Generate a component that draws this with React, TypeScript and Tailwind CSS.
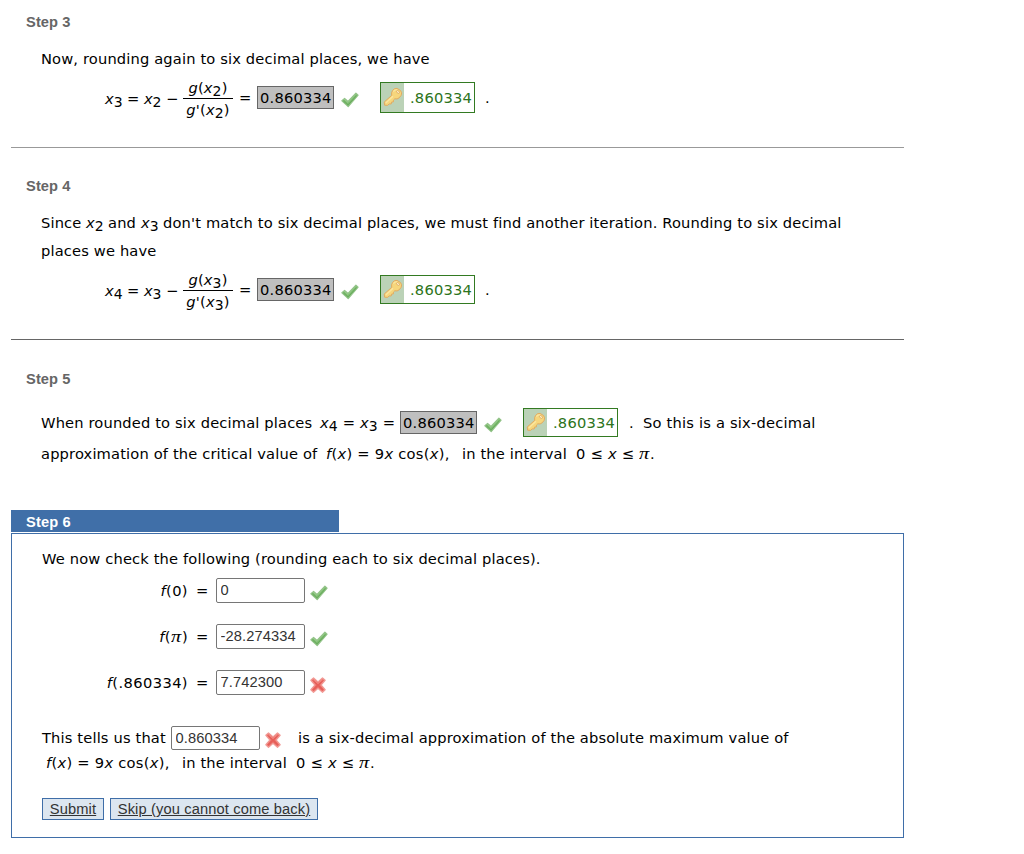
import type { ReactNode } from "react";
import clsx from "clsx";

// ── Icons ─────────────────────────────────────────────────────
function Check() {
  return (
    <svg width="18" height="16" viewBox="0 0 18 16" className="shrink-0">
      <path
        d="M.9 8.7 3.6 6.4 7 9.4 14.9 1.2 17.1 3.2 7.2 14.6Z"
        fill="#79b96b"
        stroke="#93c389"
        strokeWidth="1.2"
        strokeLinejoin="round"
      />
      <path d="M2.4 9.1 7.1 13.2 15.4 3.8" fill="none" stroke="#68ab5d" strokeWidth="1" />
      <path d="M3.2 7.3 7 10.6 14.9 2.3" fill="none" stroke="#98cb8c" strokeWidth="1" />
    </svg>
  );
}

function Cross() {
  return (
    <svg width="16" height="16" viewBox="0 0 16 16" className="shrink-0">
      <path
        d="M3.5.9 8 5 12.5.9 15.1 3.3 11 8 15.1 12.7 12.5 15.2 8 11.2 3.5 15.2.9 12.7 5 8 .9 3.3Z"
        fill="#ea6a64"
        stroke="#f19a95"
        strokeWidth="1.3"
        strokeLinejoin="round"
      />
      <path d="M3.2 3.2 12.8 13M12.8 3.2 3.2 13" stroke="#e65f59" strokeWidth="1.4" />
      <path d="M3 2.4 8 6.6 13 2.4" fill="none" stroke="#f1867f" strokeWidth="1" />
    </svg>
  );
}

function Key() {
  return (
    <svg width="20" height="20" viewBox="0 0 20 20" className="shrink-0">
      <path
        d="M9.6 3.4Q11.4 1 14.2 1.4L17.6 3.6Q19.3 5.6 18.2 8.3L16.2 10.8Q14.2 12.6 11.8 11.8L10.4 13.2 10.4 14.9 8.5 15.1 8.2 17 6.2 16.9 4.6 18.4 1.6 18.2 1.2 15 8.7 8.4Q8 5.5 9.6 3.4Z"
        fill="#f6d67c"
        stroke="#e0ab62"
        strokeWidth="1"
        strokeLinejoin="round"
      />
      <path d="M2.8 15.9 10 9.3M10.4 4.6Q11.8 2.5 14 2.9" fill="none" stroke="#fae6a2" strokeWidth="1.3" />
      <ellipse cx="15" cy="5" rx="1.7" ry="1.1" transform="rotate(40 15 5)" fill="#fff3d0" stroke="#dca95c" strokeWidth=".8" />
    </svg>
  );
}

// ── Math pieces ───────────────────────────────────────────────
function Var({ name = "x", sub }: { name?: string; sub?: string }) {
  return (
    <>
      <i>{name}</i>
      {sub && <span className="relative top-[3px] text-[14px]">{sub}</span>}
    </>
  );
}

function Pi() {
  return (
    <i className="mx-[1px] inline-block scale-x-120 font-['Liberation_Serif',serif] text-[17px] leading-[0]">π</i>
  );
}

// A run of text with its own column in the line
function Run({ w, className, children }: { w: string; className?: string; children: ReactNode }) {
  return <span className={clsx("shrink-0 whitespace-pre", w, className)}>{children}</span>;
}

function Line({ h, className, children }: { h: string; className?: string; children: ReactNode }) {
  return <div className={clsx("flex items-center", h, className)}>{children}</div>;
}

function Fraction({ sub }: { sub: string }) {
  return (
    <span className="mt-[2px] mr-[6px] flex w-[50px] shrink-0 flex-col text-center">
      <span className="h-[20px] border-b border-black leading-[17px]">
        <i>g</i>(<Var sub={sub} />)
      </span>
      <span className="h-[20px] leading-[21px] tracking-[0.2px]">
        <i>g'</i>(<Var sub={sub} />)
      </span>
    </span>
  );
}

// Graded answer, its mark and the key with the expected value
function Graded({ tall }: { tall?: boolean }) {
  return (
    <>
      <span className="-mt-[2px] flex h-[23px] w-[77px] shrink-0 items-center border border-[#666] bg-[#bfbfbf] pt-[2px] pl-[2px] tracking-[0.2px] whitespace-nowrap">
        0.860334
      </span>
      <span className="mt-[3px] ml-[7px] flex w-[39px] shrink-0">
        <Check />
      </span>
      <span
        className={clsx(
          "-mt-[2px] flex w-[95px] shrink-0 border border-[#337a22] text-[#2d7420]",
          tall ? "h-[31px]" : "h-[29px]",
        )}
      >
        <span className="flex w-[23px] items-center justify-center bg-[#bbd2b7]">
          <Key />
        </span>
        <span className="flex items-center pt-[2px] pl-[6px] tracking-[0.2px]">.860334</span>
      </span>
    </>
  );
}

function Equation({ left, right, h, tall }: { left: string; right: string; h: string; tall?: boolean }) {
  return (
    <Line h={h} className="pl-[94px]">
      <Run w="w-[78px]" className="mt-[1px] tracking-[-0.05px]">
        <Var sub={left} /> = <Var sub={right} /> −
      </Run>
      <Fraction sub={right} />
      <Run w="w-[18px]">=</Run>
      <Graded tall={tall} />
      <Run w="w-[10px]" className="ml-[10px]">.</Run>
    </Line>
  );
}

function Heading({ children }: { children: ReactNode }) {
  return (
    <h2 className="pl-[15px] font-['Liberation_Sans',Arial,sans-serif] text-[14.67px] leading-[20px] font-bold tracking-[0.1px] text-[#666]">
      {children}
    </h2>
  );
}

function Field({ value, h = "h-[25px]" }: { value: string; h?: string }) {
  return (
    <input
      defaultValue={value}
      className={clsx(
        "w-[89px] shrink-0 rounded-[2px] border border-[#767676] bg-white px-[3.5px] pb-[1px] font-['Liberation_Sans',Arial,sans-serif] text-[14.67px] tracking-[0.1px] text-[#333]",
        h,
      )}
    />
  );
}

function CheckRow({ label, value, ok }: { label: ReactNode; value: string; ok: boolean }) {
  return (
    <div className="flex h-[46px] items-center">
      <span className="mt-[1px] w-[176px] shrink-0 text-right tracking-[0.4px] whitespace-pre">{label}</span>
      <Run w="w-[20px]" className="mt-[2px] ml-[8px]">=</Run>
      <Field value={value} />
      <span className="mt-[5px] ml-[5px]">{ok ? <Check /> : <Cross />}</span>
    </div>
  );
}

function Domain() {
  return (
    <>
      <Run w="w-[136px]" className="tracking-[0.27px]">
        <i>f</i>(<i>x</i>) = 9<i>x</i> cos(<i>x</i>),
      </Run>
      <Run w="w-[114px]">in the interval</Run>
      <Run w="w-[90px]" className="tracking-[0.25px]">
        0 ≤ <i>x</i> ≤ <Pi />.
      </Run>
    </>
  );
}

const BUTTON =
  "h-[22px] border border-[#3f6ea8] bg-[#dce6f0] text-center font-['Liberation_Sans',Arial,sans-serif] text-[14.67px] leading-[20px] tracking-[0.13px] whitespace-nowrap text-[#333] underline";

export default function App() {
  return (
    <main className="h-[854px] w-[1024px] overflow-hidden bg-white pl-[11px] font-['DejaVu_Sans',Verdana,sans-serif] text-[14.67px] tracking-[0.15px] text-black">
      <div className="w-[893px]">
        {/* Step 3 */}
        <section className="h-[148px] border-b border-[#999] pt-[12px]">
          <Heading>Step 3</Heading>
          <Line h="h-[24px]" className="mt-[15px] pl-[30px]">
            <Run w="w-[390px]">Now, rounding again to six decimal places, we have</Run>
          </Line>
          <Equation left="3" right="2" h="h-[54px]" tall />
        </section>

        {/* Step 4 */}
        <section className="h-[192px] border-b border-[#666] pt-[28px]">
          <Heading>Step 4</Heading>
          <Line h="h-[28px]" className="mt-[13px] pl-[30px]">
            <Run w="w-[45px]">Since</Run>
            <Run w="w-[22px]"><Var sub="2" /></Run>
            <Run w="w-[33px]">and</Run>
            <Run w="w-[22px]"><Var sub="3" /></Run>
            <Run w="w-[680px]">don't match to six decimal places, we must find another iteration. Rounding to six decimal</Run>
          </Line>
          <Line h="h-[28px]" className="pl-[30px]">places we have</Line>
          <Equation left="4" right="3" h="h-[50px]" />
        </section>

        {/* Step 5 */}
        <section className="h-[170px] pt-[29px]">
          <Heading>Step 5</Heading>
          <Line h="h-[30px]" className="mt-[19px] pl-[30px]">
            <Run w="w-[279px]">When rounded to six decimal places</Run>
            <Run w="w-[80px]">
              <Var sub="4" /> = <Var sub="3" /> =
            </Run>
            <Graded />
            <Run w="w-[14px]" className="ml-[11px]">.</Run>
            <Run w="w-[174px]" className="tracking-[0.2px]">So this is a six-decimal</Run>
          </Line>
          <Line h="h-[30px]" className="mt-[1px] pl-[30px]">
            <Run w="w-[285px]">approximation of the critical value of</Run>
            <Domain />
          </Line>
        </section>

        {/* Step 6, the open one */}
        <h2 className="mb-[1px] h-[22px] w-[328px] bg-[#406fa8] pt-[1px] pl-[15px] font-['Liberation_Sans',Arial,sans-serif] text-[14.67px] leading-[23px] font-bold text-white">
          Step 6
        </h2>
        <section className="h-[305px] border border-[#3f6ea8] pt-[15px] pl-[30px]">
          <Line h="h-[20px]">
            <Run w="w-[500px]">We now check the following (rounding each to six decimal places).</Run>
          </Line>
          <div className="-mt-[2px] -ml-[30px]">
            <CheckRow label={<><i>f</i>(0)</>} value="0" ok />
            <CheckRow label={<><i>f</i>(<Pi />)</>} value="-28.274334" ok />
            <CheckRow label={<><i>f</i>(.860334)</>} value="7.742300" ok={false} />
          </div>
          <Line h="h-[26px]" className="mt-[20px]">
            <Run w="w-[129px]">This tells us that</Run>
            <Field value="0.860334" h="h-[24px]" />
            <span className="mt-[3px] ml-[5px] w-[33px] shrink-0">
              <Cross />
            </span>
            <Run w="w-[492px]">is a six-decimal approximation of the absolute maximum value of</Run>
          </Line>
          <Line h="h-[24px]" className="pl-[4px]">
            <Domain />
          </Line>
          <div className="mt-[23px] flex gap-[6px]">
            <button className={clsx(BUTTON, "w-[62px]")}>Submit</button>
            <button className={clsx(BUTTON, "w-[208px]")}>Skip (you cannot come back)</button>
          </div>
        </section>
      </div>
    </main>
  );
}
